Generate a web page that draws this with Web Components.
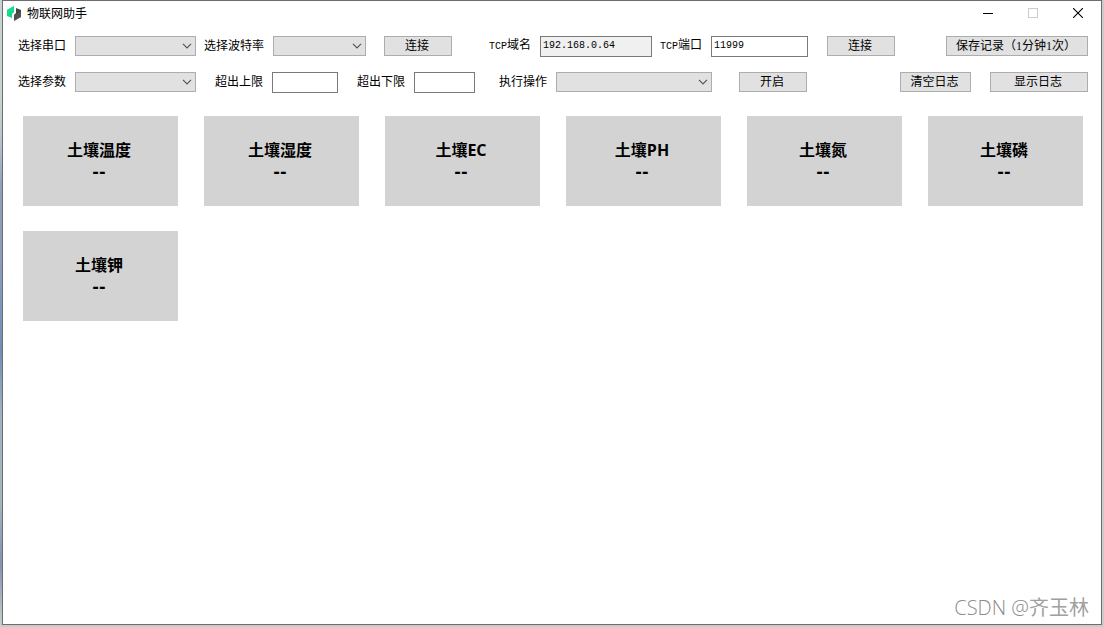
<!DOCTYPE html>
<html lang="zh-CN">
<head>
<meta charset="utf-8">
<meta name="viewport" content="width=device-width, initial-scale=1">
<title>物联网助手</title>
<style>
html, body { margin: 0; height: 100%; }
body {
  font: 12px/16px "Liberation Serif", "Noto Sans CJK SC", sans-serif;
  color: #000;
}
</style>
</head>
<body>
<iot-desktop></iot-desktop>
<script>
const define = (name, html, setup) => {
  const template = document.createElement('template');
  template.innerHTML = html;
  customElements.define(name, class extends HTMLElement {
    constructor() {
      super();
      this.attachShadow({ mode: 'open' }).append(template.content.cloneNode(true));
    }
    connectedCallback() { if (setup) setup(this, this.shadowRoot); }
  });
};

/* Title bar with the app icon, the name and the window buttons */
define('title-bar', `
<style>
:host { display: flex; align-items: center; height: 24px; padding-left: 4px; font-family: "Noto Sans CJK SC", sans-serif; }
h1 { margin: 0 auto 0 4px; font: inherit; }
button { display: flex; align-items: center; justify-content: center; width: 45px; height: 24px; padding: 0; border: 0; background: none; }
button:last-child { width: 46px; }
svg { display: block; }
</style>
<svg width="16" height="16" viewBox="0 0 16 16" aria-hidden="true">
  <path fill="#1fd18b" d="M0 5 7 1v6L5 9v4L0 11z"/>
  <path fill="#0fe08c" d="M0 5 7 1v5L3 8l-3 2z"/>
  <path fill="#444" d="M9 3l5 2v7l-7 4V10l2-2z"/>
  <path fill="#666" d="M7 10l3-1 4-3v6l-7 4z" opacity=".4"/>
</svg>
<h1><slot></slot></h1>
<button type="button" aria-label="最小化"><svg width="10" height="10" shape-rendering="crispEdges"><path d="M0 5.5h10" stroke="#000"/></svg></button>
<button type="button" aria-label="最大化" disabled><svg width="10" height="10" shape-rendering="crispEdges"><path d="M.5.5h9v9h-9z" fill="none" stroke="#ccc"/></svg></button>
<button type="button" aria-label="关闭"><svg width="10" height="10"><path d="M0 0l10 10M10 0L0 10" stroke="#000" stroke-width="1.1"/></svg></button>
`);

/* Label and drop-down */
define('combo-field', `
<style>
:host { display: flex; align-items: center; gap: 9px; white-space: nowrap; }
.box { position: relative; width: var(--w); height: 20px; }
select { display: block; appearance: none; box-sizing: border-box; width: 100%; height: 20px; margin: 0; padding: 0 20px 0 4px; border: 1px solid #adadad; border-radius: 0; background: #e1e1e1; font: inherit; }
svg { position: absolute; right: 4px; top: 7px; pointer-events: none; }
</style>
<label for="choice"><slot></slot></label>
<div class="box">
  <select id="choice"></select>
  <svg width="10" height="6" aria-hidden="true"><path d="M1 .8l4 4 4-4" fill="none" stroke="#555" stroke-width="1.2"/></svg>
</div>
`);

/* Label and text box */
define('text-field', `
<style>
:host { display: flex; align-items: center; gap: 9px; white-space: nowrap; }
input { box-sizing: border-box; width: var(--w); height: 21px; margin: 0; padding: 0 2px 2px; border: 1px solid #7a7a7a; border-radius: 0; background: #fff; color: #000; font: 10px/16px "Liberation Mono", monospace; }
input:read-only { background: #f0f0f0; }
</style>
<label for="entry"><slot></slot></label>
<input id="entry" type="text">
`, (host, root) => {
  const input = root.querySelector('input');
  input.value = host.getAttribute('value') || '';
  input.readOnly = host.hasAttribute('readonly');
});

define('push-button', `
<style>
:host { display: block; width: var(--w); }
button { display: block; box-sizing: border-box; width: 100%; height: 20px; margin: 0; padding: 0 2px 0 0; border: 1px solid #adadad; border-radius: 0; background: #e1e1e1; color: #000; font: inherit; white-space: nowrap; }
</style>
<button type="button"><slot></slot></button>
`);

/* One soil reading: its name above its value */
define('sensor-card', `
<style>
:host { display: block; box-sizing: border-box; height: 90px; padding: 23px 3px 0 0; background: #d3d3d3; text-align: center; font: bold 16px/22px "Open Sans", "Noto Sans CJK SC", sans-serif; }
h2, p { margin: 0; font: inherit; }
p { font-family: "DejaVu Sans", sans-serif; }
</style>
<h2><slot></slot></h2>
<p><slot name="value">--</slot></p>
`);

define('iot-desktop', `
<style>
:host {
  display: flex; box-sizing: border-box; min-height: 100%; padding: 0 2px 2px; position: relative;
  background:
    linear-gradient(#c8d2d2 0 16%, #b8c6cc 22%, #8ea0bc 30%, #8b9cc0 42%, #6f8fb8 56%, #9fb2c2 66%, #a4b6bd 80%, #8592b4 90%, #c6d0cc) left / 2px 100% no-repeat,
    #cbcbcb;
}
.window { display: flex; flex-direction: column; flex: 1; border: 1px solid #6d6d6d; background: #fff; }
.row { display: flex; align-items: center; height: 22px; padding: 0 13px 0 15px; }
.first { margin-top: 10px; }
.second { margin-top: 14px; }
.end { margin-left: auto; }
.g8 { margin-left: 8px; }
.g18 { margin-left: 18px; }
.g19 { margin-left: 19px; }
.g24 { margin-left: 24px; }
.g27 { margin-left: 27px; }
.g37 { margin-left: 37px; }
.latin { font: 10px/16px "Liberation Mono", monospace; }
.cards { display: grid; grid-template-columns: repeat(auto-fill, 155px); gap: 25px 26px; padding: 23px 18px 24px 20px; }
.mark { position: absolute; right: 15px; bottom: 6px; margin: 0; font: 300 20px/26px "Open Sans", "Noto Sans CJK SC", sans-serif; color: #8c8c8c; }
.mark span { font-weight: 400; color: #a0a0a0; }
</style>
<main class="window">
  <title-bar>物联网助手</title-bar>
  <div class="row first">
    <combo-field style="--w:121px">选择串口</combo-field>
    <combo-field class="g8" style="--w:93px">选择波特率</combo-field>
    <push-button class="g18" style="--w:68px">连接</push-button>
    <text-field class="g37" style="--w:112px" value="192.168.0.64" readonly><span class="latin">TCP</span>域名</text-field>
    <text-field class="g8" style="--w:97px" value="11999"><span class="latin">TCP</span>端口</text-field>
    <push-button class="g19" style="--w:68px">连接</push-button>
    <push-button class="end" style="--w:142px">保存记录（1分钟1次）</push-button>
  </div>
  <div class="row second">
    <combo-field style="--w:121px">选择参数</combo-field>
    <text-field class="g19" style="--w:66px">超出上限</text-field>
    <text-field class="g19" style="--w:61px">超出下限</text-field>
    <combo-field class="g24" style="--w:156px">执行操作</combo-field>
    <push-button class="g27" style="--w:68px">开启</push-button>
    <push-button class="end" style="--w:71px">清空日志</push-button>
    <push-button class="g19" style="--w:98px">显示日志</push-button>
  </div>
  <section class="cards">
    <sensor-card>土壤温度</sensor-card>
    <sensor-card>土壤湿度</sensor-card>
    <sensor-card>土壤EC</sensor-card>
    <sensor-card>土壤PH</sensor-card>
    <sensor-card>土壤氮</sensor-card>
    <sensor-card>土壤磷</sensor-card>
    <sensor-card>土壤钾</sensor-card>
  </section>
</main>
<p class="mark">CSDN @<span>齐玉林</span></p>
`);
</script>
</body>
</html>
